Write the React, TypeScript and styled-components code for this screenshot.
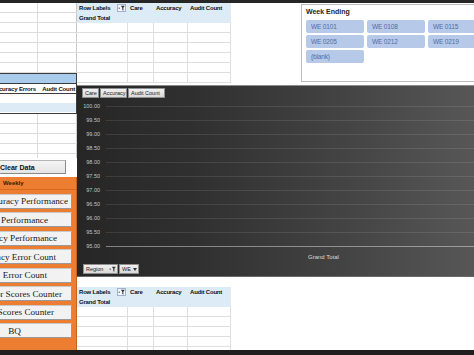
import React from 'react';
import styled, {createGlobalStyle} from 'styled-components';

const GlobalStyle = createGlobalStyle`
  html, body {
    margin: 0;
    padding: 0;
    background: #fff;
  }
  body {
    font-family: "Liberation Sans", Arial, sans-serif;
  }
`;

const Page = styled.div`
  width: 474px;
  height: 355px;
  overflow: hidden;
  display: flex;
  flex-direction: column;
  background: #fff;
`;

const TopStrip = styled.div`
  flex: none;
  height: 3px;
  background: #262626;
`;

const BottomStrip = styled.div`
  flex: 1;
  background: #1f1f1f;
`;

const Main = styled.div`
  flex: none;
  height: 347px;
  display: flex;
`;

// ---- left column ----

const LeftCol = styled.div`
  width: 77px;
  flex: none;
  display: flex;
  flex-direction: column;
  overflow: hidden;
`;

const SheetCells = styled.div<{ $h: number }>`
  height: ${p => p.$h}px;
  flex: none;
  background-image:
    repeating-linear-gradient(to bottom, transparent 0 9px, #dcdcdc 9px 10px),
    linear-gradient(to right, transparent 37px, #dcdcdc 37px 38px, transparent 38px 76px, #c8c8c8 76px);
`;

const TotalsBlock = styled.div`
  height: 41px;
  flex: none;
  box-sizing: border-box;
  border: 1px solid #3c3c3c;
  border-left: none;
  display: flex;
  flex-direction: column;
`;

const BlockBand = styled.div`
  height: 9px;
  background: #a9cbec;
  border-bottom: 1px solid #3c3c3c;
`;

const BlockRow = styled.div<{ $tint?: boolean; $line?: boolean }>`
  height: 9px;
  display: grid;
  grid-template-columns: 37px 38px;
  column-gap: 1px;
  background: ${p => p.$tint ? '#ddebf7' : '#fff'};
  border-bottom: ${p => p.$line ? '1px solid #3c3c3c' : 'none'};
`;

const BlockHead = styled.div`
  display: flex;
  justify-content: flex-end;
  align-items: center;
  overflow: hidden;
  white-space: nowrap;
  font-size: 6px;
  font-weight: bold;
  letter-spacing: -0.15px;
  color: #111;
  padding-right: 1px;
`;

const ClearButton = styled.div`
  flex: none;
  margin-top: 2px;
  width: 66px;
  height: 14px;
  box-sizing: border-box;
  background: linear-gradient(#f4f4f4, #e4e4e4);
  border: 1px solid #b4b4b4;
  border-left: none;
  border-right-color: #8a8a8a;
  border-bottom-color: #8a8a8a;
  display: flex;
  align-items: center;
  font-size: 7px;
  font-weight: bold;
  color: #111;
  white-space: nowrap;
`;

const MacroPanel = styled.div`
  margin-top: 3px;
  flex: 1;
  background: #ed7d31;
  display: flex;
  flex-direction: column;
  gap: 3.5px;
  border-right: 1px solid #c9621c;
`;

const PanelHeader = styled.div`
  height: 12px;
  display: flex;
  align-items: center;
  padding-left: 3px;
  font-size: 6px;
  font-weight: bold;
  color: #3a1c06;
  border-bottom: 1px solid #d86a20;
`;

const MacroButton = styled.div<{ $inset: number }>`
  width: 72px;
  height: 15px;
  box-sizing: border-box;
  background: #f2f2f2;
  border: 1px solid #c8c8c8;
  border-left: none;
  border-right-color: #9a9a9a;
  border-bottom-color: #9a9a9a;
  display: flex;
  justify-content: flex-end;
  align-items: center;
  overflow: hidden;
  white-space: nowrap;
  padding-right: ${p => p.$inset}px;
  font-family: "Liberation Serif", "Times New Roman", serif;
  font-size: 9.2px;
  color: #1a1a1a;
`;

// ---- right area ----

const RightArea = styled.div`
  flex: 1;
  display: flex;
  flex-direction: column;
  min-width: 0;
`;

const TopRow = styled.div`
  height: 82px;
  flex: none;
  display: flex;
`;

const Pivot = styled.div<{ $h: number }>`
  width: 154px;
  height: ${p => p.$h}px;
  flex: none;
  overflow: hidden;
  display: grid;
  grid-template-columns: 51px 26px 34px 43px;
  grid-auto-rows: 10px;
  font-size: 6px;
  letter-spacing: -0.2px;
  color: #111;
`;

const PivotCell = styled.div<{ $head?: boolean }>`
  box-sizing: border-box;
  display: flex;
  align-items: center;
  justify-content: space-between;
  padding: 0 1px 0 2px;
  white-space: nowrap;
  font-weight: bold;
  background: ${p => p.$head ? '#ddebf7' : '#fff'};
  border-right: ${p => p.$head ? 'none' : '1px solid #dedede'};
  border-bottom: ${p => p.$head ? 'none' : '1px solid #dedede'};
`;

const FilterBox = styled.span`
  width: 9px;
  height: 8px;
  box-sizing: border-box;
  border: 1px solid #9fb3cf;
  background: #f4f7fb;
  display: flex;
  align-items: center;
  justify-content: center;
  margin-right: 1px;
`;

const Blank = styled.div`
  width: 70px;
  flex: none;
`;

const Slicer = styled.div`
  flex: 1;
  margin-top: 1px;
  height: 78px;
  box-sizing: border-box;
  border: 1px solid #bdbdbd;
  border-right: none;
  padding: 2px 0 0 4px;
  background: #fff;
`;

const SlicerTitle = styled.div`
  height: 10px;
  line-height: 10px;
  font-size: 7px;
  font-weight: bold;
  color: #262626;
  margin-bottom: 3px;
`;

const SlicerGrid = styled.div`
  display: grid;
  grid-template-columns: repeat(3, 58px);
  grid-auto-rows: 13px;
  column-gap: 3px;
  row-gap: 2px;
`;

const SlicerItem = styled.div`
  border-radius: 2px;
  background: #b7c9e8;
  color: #4d6ca6;
  font-size: 6.5px;
  letter-spacing: -0.15px;
  display: flex;
  align-items: center;
  padding-left: 5px;
  white-space: nowrap;
`;

const Chart = styled.section`
  height: 192px;
  flex: none;
  box-sizing: border-box;
  border-top: 1px solid #8c8c8c;
  border-bottom: 1px solid #6a6a6a;
  padding-top: 2px;
  background: linear-gradient(to right, #262626 0%, #303030 30%, #454545 70%, #575757 100%);
  display: flex;
  flex-direction: column;
`;

const FieldBar = styled.div`
  height: 10px;
  display: flex;
  gap: 1px;
  padding-left: 5px;
`;

const FieldButton = styled.div<{ $w: number }>`
  width: ${p => p.$w}px;
  height: 10px;
  box-sizing: border-box;
  background: linear-gradient(#f0f0f0, #d9d9d9);
  border: 1px solid #8e8e8e;
  display: flex;
  align-items: center;
  justify-content: space-between;
  padding: 0 1px 0 2px;
  font-size: 5.5px;
  color: #222;
  white-space: nowrap;
`;

const Plot = styled.div`
  margin-top: 1px;
  display: flex;
  flex-direction: column;
`;

const GridRow = styled.div`
  height: 14px;
  display: flex;
  align-items: center;
`;

const AxisLabel = styled.span`
  width: 23px;
  text-align: right;
  font-size: 5.5px;
  color: #c4c4c4;
  margin-right: 6px;
`;

const GridLine = styled.div<{ $axis?: boolean }>`
  flex: 1;
  height: 1px;
  background: ${p => p.$axis ? 'rgba(255,255,255,0.42)' : 'rgba(255,255,255,0.1)'};
`;

const CategoryRow = styled.div`
  height: 8px;
  line-height: 8px;
  padding-left: 231px;
  font-size: 6px;
  color: #dadada;
`;

const FilterBar = styled(FieldBar)`
  margin-top: 3px;
  padding-left: 6px;
`;

const BottomRow = styled.div`
  margin-top: 10px;
  height: 63px;
  display: flex;
`;

const FunnelIcon = ({color = '#333'}: { color?: string }) => (
  <svg width="7" height="6" viewBox="0 0 10 9">
    <path d="M0 4 H3 L1.5 6 Z" fill={color}/>
    <path d="M4 1 H10 L7.8 4 V8.5 L6.2 7.5 V4 Z" fill={color}/>
  </svg>
);

const DropIcon = () => (
  <svg width="4" height="3" viewBox="0 0 4 3">
    <path d="M0 0 H4 L2 3 Z" fill="#333"/>
  </svg>
);

const axisValues = ['100.00', '99.50', '99.00', '98.50', '98.00', '97.50', '97.00', '96.50', '96.00', '95.50', '95.00'];

const macros = [
  {label: 'Accuracy Performance', inset: 3},
  {label: 'Performance', inset: 23},
  {label: 'Efficiency Performance', inset: 14},
  {label: 'Efficiency Error Count', inset: 15},
  {label: 'Error Count', inset: 24},
  {label: 'Error Scores Counter', inset: 9},
  {label: 'Scores Counter', inset: 17},
  {label: 'BQ', inset: 50},
];

const weeks = ['WE 0101', 'WE 0108', 'WE 0115', 'WE 0205', 'WE 0212', 'WE 0219', '(blank)'];

function PivotTable({height, blankRows}: { height: number, blankRows: number }) {
  return (
    <Pivot $h={height}>
      <PivotCell $head>Row Labels<FilterBox><FunnelIcon/></FilterBox></PivotCell>
      <PivotCell $head>Care</PivotCell>
      <PivotCell $head>Accuracy</PivotCell>
      <PivotCell $head>Audit Count</PivotCell>
      <PivotCell $head>Grand Total</PivotCell>
      <PivotCell $head/>
      <PivotCell $head/>
      <PivotCell $head/>
      {Array.from({length: blankRows * 4}).map((_, i) => <PivotCell key={i}/>)}
    </Pivot>
  );
}

export default function App() {
  return (
    <Page>
      <GlobalStyle/>
      <TopStrip/>
      <Main>
        <LeftCol>
          <SheetCells $h={70}/>
          <TotalsBlock>
            <BlockBand/>
            <BlockRow $line>
              <BlockHead>Accuracy Errors</BlockHead>
              <BlockHead>Audit Count</BlockHead>
            </BlockRow>
            <BlockRow/>
            <BlockRow $tint/>
          </TotalsBlock>
          <SheetCells $h={44}/>
          <ClearButton>Clear Data</ClearButton>
          <MacroPanel>
            <PanelHeader>Weekly</PanelHeader>
            {macros.map(m => <MacroButton key={m.label} $inset={m.inset}>{m.label}</MacroButton>)}
          </MacroPanel>
        </LeftCol>

        <RightArea>
          <TopRow>
            <PivotTable height={80} blankRows={6}/>
            <Blank/>
            <Slicer>
              <SlicerTitle>Week Ending</SlicerTitle>
              <SlicerGrid>
                {weeks.map(w => <SlicerItem key={w}>{w}</SlicerItem>)}
              </SlicerGrid>
            </Slicer>
          </TopRow>

          <Chart>
            <FieldBar>
              <FieldButton $w={17}>Care</FieldButton>
              <FieldButton $w={27}>Accuracy</FieldButton>
              <FieldButton $w={37}>Audit Count</FieldButton>
            </FieldBar>
            <Plot>
              {axisValues.map((v, i) => (
                <GridRow key={v}>
                  <AxisLabel>{v}</AxisLabel>
                  <GridLine $axis={i === axisValues.length - 1}/>
                </GridRow>
              ))}
            </Plot>
            <CategoryRow>Grand Total</CategoryRow>
            <FilterBar>
              <FieldButton $w={35}>Region<FunnelIcon/></FieldButton>
              <FieldButton $w={20}>WE<DropIcon/></FieldButton>
            </FilterBar>
          </Chart>

          <BottomRow>
            <PivotTable height={63} blankRows={5}/>
          </BottomRow>
        </RightArea>
      </Main>
      <BottomStrip/>
    </Page>
  );
}
